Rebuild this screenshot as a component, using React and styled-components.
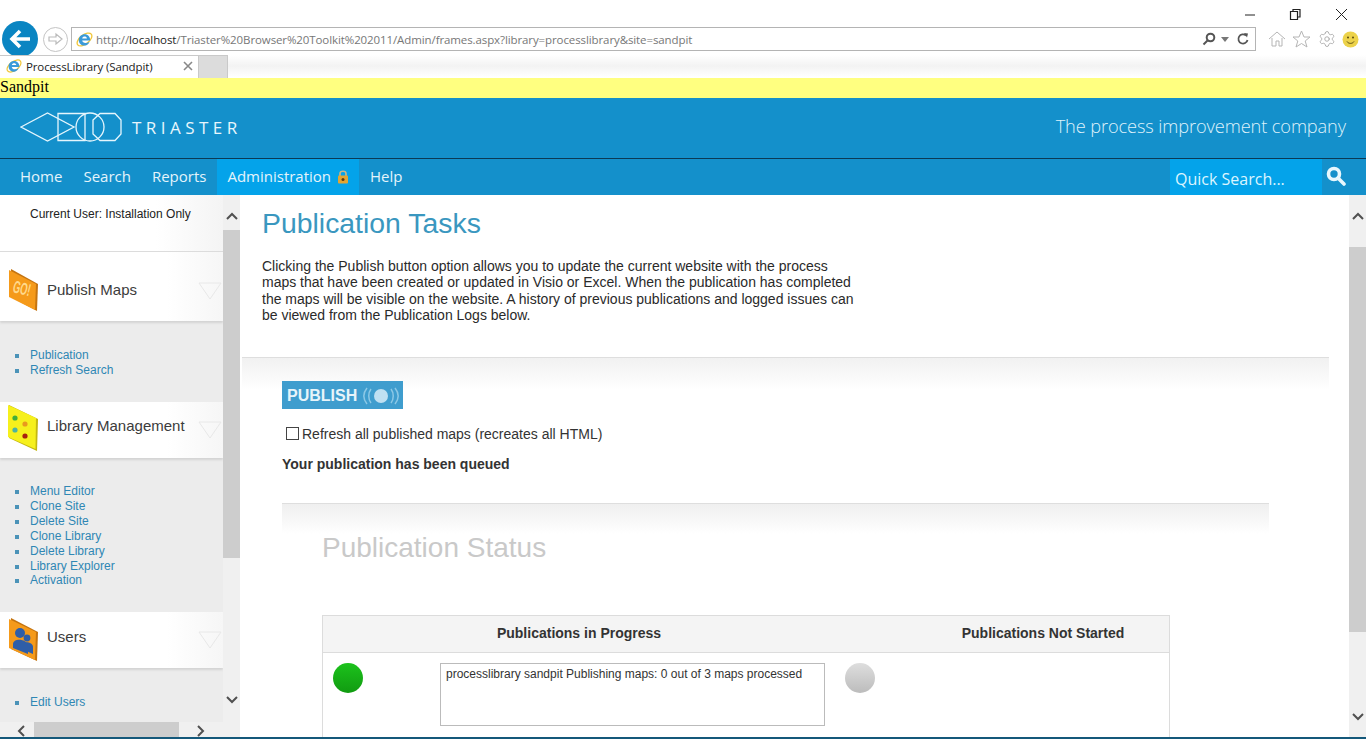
import React from "react";
import styled, { createGlobalStyle } from "styled-components";
import { Settings } from "lucide-react";

const Global = createGlobalStyle`
    html, body {
        margin: 0;
        padding: 0;
        height: 100%;
        overflow: hidden;
        background: #fff;
        font-family: "Liberation Sans", Arial, sans-serif;
    }
`;

const Page = styled.div`
    width: 1366px;
    height: 739px;
    display: flex;
    flex-direction: column;
    overflow: hidden;
    box-sizing: border-box;
    border-bottom: 2px solid #14587a;
`;

/* browser chrome */
const Chrome = styled.div`
    height: 78px;
    flex: none;
    display: flex;
    flex-direction: column;
    background: linear-gradient(#fff 55px, #f3f3f3 66px, #fff 77px);
`;

const WindowRow = styled.div`
    height: 27px;
    flex: none;
    display: flex;
    justify-content: flex-end;
    align-items: center;
    padding: 2px 18px 0 0;
    box-sizing: border-box;
    gap: 32px;
`;

const AddressRow = styled.div`
    height: 26px;
    flex: none;
    display: flex;
    align-items: center;
    padding-left: 2px;
    margin-top: -2px;
    margin-bottom: 4px;
`;

const BackButton = styled.div`
    width: 36px;
    height: 36px;
    flex: none;
    border-radius: 50%;
    background: #0a85c2;
    display: flex;
    align-items: center;
    justify-content: center;
    margin-right: 5px;
    margin-top: 2px;
`;

const ForwardButton = styled.div`
    width: 25px;
    height: 25px;
    flex: none;
    box-sizing: border-box;
    border-radius: 50%;
    border: 1px solid #c4c4c4;
    display: flex;
    align-items: center;
    justify-content: center;
    margin-right: 3px;
    margin-top: 2px;
`;

const UrlBox = styled.div`
    width: 1185px;
    height: 24px;
    flex: none;
    box-sizing: border-box;
    border: 1px solid #b4b4b4;
    background: #fff;
    display: flex;
    align-items: center;
    padding: 0 5px 0 4px;
    font: 11.5px "Open Sans", sans-serif;
    color: #777;
    margin-top: 2px;
`;

const UrlText = styled.span`
    margin-left: 3px;
    flex: 1;
    letter-spacing: -0.1px;
    white-space: nowrap;
    b {
        font-weight: 400;
        color: #222;
    }
`;

const UrlTools = styled.div`
    display: flex;
    align-items: center;
    gap: 5px;
`;

const ToolIcons = styled.div`
    display: flex;
    align-items: center;
    gap: 6px;
    margin-left: 12px;
    margin-top: 2px;
`;

const TabRow = styled.div`
    height: 23px;
    flex: none;
    display: flex;
    align-items: flex-end;
`;

const Tab = styled.div`
    width: 199px;
    height: 23px;
    box-sizing: border-box;
    background: #fff;
    border: 1px solid #c9c9c9;
    border-bottom: none;
    border-left: none;
    display: flex;
    align-items: center;
    padding: 0 5px 2px 6px;
    font: 11.5px "Open Sans", sans-serif;
    letter-spacing: -0.13px;
    color: #222;
`;

const TabTitle = styled.span`
    flex: 1;
    margin-left: 4px;
`;

const NewTab = styled.div`
    width: 29px;
    height: 23px;
    box-sizing: border-box;
    background: #dcdcdc;
    border: 1px solid #c9c9c9;
    border-bottom: none;
    border-left: none;
`;

const EnvBar = styled.div`
    height: 20px;
    flex: none;
    background: #ffff80;
    font: 16px/17px "Liberation Serif", serif;
    color: #000;
    white-space: nowrap;
`;

/* site header */
const Header = styled.header`
    height: 58px;
    flex: none;
    background: #1490cb;
    border-bottom: 1px solid #0b3a55;
    display: flex;
    align-items: center;
    justify-content: space-between;
    padding: 0 20px 2px 20px;
    box-sizing: content-box;
`;

const Brand = styled.div`
    display: flex;
    align-items: center;
    gap: 10px;
    color: #e8f6fc;
    font: 400 17px "Open Sans", sans-serif;
    letter-spacing: 4.45px;
`;

const Tagline = styled.div`
    font: 300 18.2px "Open Sans", sans-serif;
    color: #dff2fb;
    letter-spacing: -0.1px;
    margin-top: -3px;
`;

const Nav = styled.nav`
    height: 36px;
    flex: none;
    background: #1490cb;
    display: flex;
    padding-left: 10px;
    font: 15px "Open Sans", sans-serif;
    color: #e4f4fb;
`;

const NavItem = styled.div`
    display: flex;
    align-items: center;
    gap: 6px;
    padding: 0 10px 2px;
    background: ${({ $active }) => ($active ? "#04a3ea" : "transparent")};
    margin-right: ${({ $gap }) => $gap || 0}px;
`;

const QuickSearch = styled.div`
    margin-left: auto;
    display: flex;
    align-items: stretch;
`;

const QuickField = styled.div`
    width: 152px;
    background: #04a3ea;
    padding: 9px 0 0 5px;
    font-size: 16px;
    color: #dcf5ff;
    box-sizing: border-box;
`;

const QuickButton = styled.div`
    width: 44px;
    box-sizing: border-box;
    padding: 0 16px 2px 0;
    display: flex;
    align-items: center;
    justify-content: center;
`;

/* frames */
const Frames = styled.div`
    flex: 1;
    min-height: 0;
    display: flex;
`;

const LeftFrame = styled.aside`
    width: 240px;
    flex: none;
    display: grid;
    grid-template-columns: 223px 17px;
    grid-template-rows: 527px 17px;
`;

const LeftPane = styled.div`
    overflow: hidden;
    background: linear-gradient(90deg, #fff 70%, #f4f4f4 100%);
`;

const CurrentUser = styled.div`
    height: 57px;
    box-sizing: border-box;
    border-bottom: 1px solid #dcdcdc;
    padding: 12px 0 0 30px;
    font-size: 12px;
    color: #222;
`;

const SectionHead = styled.div`
    height: ${({ $tall }) => ($tall ? 69 : 56)}px;
    box-sizing: border-box;
    background: linear-gradient(90deg, #fff 75%, #f6f6f6 100%);
    box-shadow: 0 2px 2px #d4d4d4;
    display: flex;
    align-items: center;
    padding: ${({ $tall }) => ($tall ? "8px" : "0")} 1px 0 7px;
    position: relative;
    font-size: 15px;
    color: #3c3c3c;
`;

const SectionTitle = styled.span`
    flex: 1;
    margin-left: 8px;
    margin-top: ${({ $shift }) => $shift}px;
`;

const SectionList = styled.ul`
    height: ${({ $h }) => $h}px;
    box-sizing: border-box;
    margin: 0;
    padding: ${({ $top }) => $top || 25}px 0 0 30px;
    list-style: none;
    background: #ececec;
`;

const SectionLink = styled.li`
    font-size: 12px;
    line-height: 14.9px;
    color: #2f87b4;
    position: relative;
    white-space: nowrap;
    &::before {
        content: "";
        position: absolute;
        left: -15px;
        top: 6px;
        width: 4px;
        height: 4px;
        background: #4b93b8;
    }
`;

const Scrollbar = styled.div`
    background: #f0f0f0;
    display: flex;
    flex-direction: ${({ $horizontal }) => ($horizontal ? "row" : "column")};
    align-items: center;
    justify-content: space-between;
    position: relative;
`;

const ScrollThumb = styled.div`
    background: #cdcdcd;
    flex: none;
    position: absolute;
    ${({ $horizontal }) => ($horizontal ? "top:0;bottom:0;" : "left:0;right:0;")}
`;

const ArrowCell = styled.div`
    width: 17px;
    height: ${({ $span }) => $span || 17}px;
    display: flex;
    align-items: center;
    justify-content: center;
    flex: none;
`;

const Corner = styled.div`
    background: #f0f0f0;
`;

const MainFrame = styled.main`
    flex: 1;
    min-width: 0;
    display: flex;
`;

const MainPane = styled.div`
    flex: 1;
    overflow: hidden;
    padding: 0 20px 0 2px;
`;

const Intro = styled.div`
    padding: 12px 0 0 20px;
    height: 162px;
    box-sizing: border-box;
`;

const Title = styled.h1`
    margin: 0 0 19px;
    font-size: 28.4px;
    line-height: 32px;
    font-weight: 400;
    color: #3a97bf;
`;

const Lead = styled.p`
    margin: 0;
    width: 600px;
    font-size: 14px;
    line-height: 16.3px;
    color: #2a2a2a;
`;

const ActionBand = styled.section`
    border-top: 1px solid #dedede;
    background: linear-gradient(#f1f1f1, #fff 32px);
    padding: 23px 60px 0 40px;
`;

const PublishButton = styled.div`
    width: 121px;
    height: 28px;
    background: #3f9dce;
    display: flex;
    align-items: center;
    gap: 5px;
    padding: 1px 0 0 5px;
    box-sizing: border-box;
    color: #e7f4fa;
    font-size: 16px;
    font-weight: 700;
`;

const RefreshLine = styled.label`
    display: flex;
    align-items: center;
    margin: 17px 0 0 4px;
    height: 16px;
    font-size: 14px;
    color: #333;
`;

const Box = styled.span`
    width: 13px;
    height: 13px;
    box-sizing: border-box;
    border: 1px solid #444;
    background: #fff;
    margin-right: 3px;
    margin-top: -2px;
`;

const Queued = styled.div`
    margin-top: 14px;
    font-size: 14px;
    line-height: 16px;
    font-weight: 700;
    color: #333;
`;

const StatusPanel = styled.section`
    margin-top: 31px;
    border-top: 1px solid #dedede;
    background: linear-gradient(#efefef, #fff 30px);
    padding: 26px 0 0 40px;
`;

const StatusTitle = styled.h2`
    margin: 0 0 50px;
    font-size: 28px;
    line-height: 35px;
    font-weight: 400;
    color: #c9c9c9;
`;

const StatusTable = styled.div`
    width: 848px;
    box-sizing: border-box;
    border: 1px solid #dcdcdc;
    border-bottom: none;
    height: 140px;
`;

const StatusHead = styled.div`
    height: 36px;
    background: #f4f4f4;
    border-bottom: 1px solid #dcdcdc;
    display: grid;
    grid-template-columns: 512px 1fr;
    font-size: 14px;
    font-weight: 700;
    color: #333;
    line-height: 35px;
`;

const HeadCell = styled.div`
    text-align: center;
    padding-left: ${({ $pad }) => $pad || 0}px;
`;

const StatusRow = styled.div`
    display: flex;
    align-items: flex-start;
    padding: 10px 0 0 10px;
`;

const Dot = styled.div`
    width: 30px;
    height: 30px;
    flex: none;
    border-radius: 50%;
    background: ${({ $grey }) =>
        $grey ? "linear-gradient(#dedede, #bcbcbc)" : "linear-gradient(#1cc21c, #119b11)"};
    margin-right: ${({ $gap }) => $gap || 0}px;
`;

const MessageBox = styled.div`
    width: 385px;
    height: 63px;
    flex: none;
    box-sizing: border-box;
    border: 1px solid #bbb;
    padding: 3px 5px;
    font-size: 12px;
    line-height: 14px;
    color: #333;
    margin-right: 20px;
`;

const IeIcon = ({ size = 17 }) => (
    <svg width={size} height={size} viewBox="0 0 17 17">
        <ellipse cx="8.5" cy="8.5" rx="8.6" ry="4.6" fill="none" stroke="#f0c63a" strokeWidth="1.3" transform="rotate(-38 8.5 8.5)" />
        <path
            d="M2.8 8.5 C3 5.5 5.5 3.2 8.7 3.2 C12 3.2 14.3 5.8 14.2 9.6 L6.2 9.6 C6.4 12.2 10 12.8 13.4 11 C12.4 13.6 10.4 14.6 8.4 14.6 C4.8 14.6 2.5 12 2.8 8.5 Z M6.2 7.4 L10.9 7.4 C10.7 5 6.6 5 6.2 7.4 Z"
            fill="#3a9ad9"
            fillRule="evenodd"
        />
    </svg>
);

const Logo = () => (
    <svg width="102" height="30" viewBox="0 0 102 30" fill="none" stroke="#e6f6fd" strokeWidth="1.3">
        <path d="M1 15 L27.5 1 L54 15 L27.5 29 Z" />
        <path d="M38 1.5 H65 V28.5 H38 Z" />
        <circle cx="70" cy="15" r="14" />
        <path d="M80 1.5 H95 L101 8 V22 L95 28.5 H80 L73 22 V8 Z" />
    </svg>
);

const Chevron = ({ dir }) => {
    const paths = {
        up: "M1 9 L6 4 L11 9",
        down: "M1 4 L6 9 L11 4",
        left: "M9 1 L4 6 L9 11",
        right: "M3 1 L8 6 L3 11",
    };
    return (
        <svg width="12" height="12" viewBox="0 0 12 12" fill="none" stroke="#505050" strokeWidth="2">
            <path d={paths[dir]} />
        </svg>
    );
};

const Funnel = () => (
    <svg width="24" height="18" viewBox="0 0 24 18" fill="none" stroke="#e8e8e8" strokeWidth="1">
        <path d="M1 1 H23 L12 17 Z" />
    </svg>
);

const GoIcon = () => (
    <svg width="32" height="44" viewBox="0 0 32 44">
        <path d="M4 0 L31 15 L30 42 L4 28 Z" fill="#c47410" />
        <path d="M2 1 L29 15 L28 41 L2 28 Z" fill="#f59a1a" />
        <text x="0" y="0" fontFamily="Liberation Sans" fontSize="15" fontWeight="700" fill="#ffd98c" transform="translate(5 23) rotate(14) scale(0.62 1.15)">GO!</text>
    </svg>
);

const DotsIcon = () => (
    <svg width="32" height="48" viewBox="0 0 32 48" style={{ marginTop: -4 }}>
        <path d="M2 1 L31 15 L30 47 L2 34 Z" fill="#c4b810" />
        <path d="M1 1 L29 14 L28.5 45 L1 33 Z" fill="#f6f01c" />
        <circle cx="8" cy="14" r="2.6" fill="#3fae3a" />
        <circle cx="18" cy="20" r="2.6" fill="#e89a1e" />
        <circle cx="8" cy="26" r="2.6" fill="#4cb3a0" />
        <circle cx="18" cy="32" r="2.6" fill="#a8200e" />
    </svg>
);

const UsersIcon = () => (
    <svg width="32" height="44" viewBox="0 0 32 44">
        <path d="M4 0 L31 14 L30 43 L4 31 Z" fill="#c47410" />
        <path d="M2 1 L29 14 L28 42 L2 30 Z" fill="#f59a1a" />
        <circle cx="20" cy="20" r="3.4" fill="#2f5ea8" />
        <path d="M16 25 C20 23 26 25 26 29 V36 L17 32 Z" fill="#2f5ea8" />
        <circle cx="13" cy="15" r="5" fill="#2f5ea8" />
        <path d="M6 30 V26 C6 20 20 20 21 28 V36 Z" fill="#2f5ea8" />
    </svg>
);

const MiniButton = styled.svg`
    flex: none;
`;

const App = () => (
    <Page>
        <Global />
        <Chrome>
            <WindowRow>
                <MiniButton width="13" height="13" viewBox="0 0 13 13" stroke="#222" fill="none">
                    <path d="M2 7 H12" />
                </MiniButton>
                <MiniButton width="13" height="13" viewBox="0 0 13 13" stroke="#222" fill="none" strokeWidth="1.2" style={{ marginLeft: 1 }}>
                    <path d="M1.5 3.5 H8.5 V11.5 H1.5 Z M4 3.5 V1.5 H11 V9 H8.5" />
                </MiniButton>
                <MiniButton width="13" height="13" viewBox="0 0 13 13" stroke="#222" fill="none" style={{ marginLeft: 1 }}>
                    <path d="M1 1 L12 12 M12 1 L1 12" />
                </MiniButton>
            </WindowRow>
            <AddressRow>
                <BackButton>
                    <svg width="22" height="20" viewBox="0 0 22 20" fill="none" stroke="#fff" strokeWidth="3.6">
                        <path d="M11 2 L3 10 L11 18 M3 10 H21" />
                    </svg>
                </BackButton>
                <ForwardButton>
                    <svg width="16" height="14" viewBox="0 0 16 14" fill="none" stroke="#bbb" strokeWidth="1.2">
                        <path d="M1 5 H8 V2 L14 7 L8 12 V9 H1 Z" />
                    </svg>
                </ForwardButton>
                <UrlBox>
                    <IeIcon />
                    <UrlText>
                        http://<b>localhost</b>/Triaster%20Browser%20Toolkit%202011/Admin/frames.aspx?library=processlibrary&amp;site=sandpit
                    </UrlText>
                    <UrlTools>
                        <svg width="14" height="14" viewBox="0 0 14 14" fill="none" stroke="#555" strokeWidth="2">
                            <circle cx="8.5" cy="5.5" r="3.8" />
                            <path d="M5.5 8.5 L1.5 12.5" />
                        </svg>
                        <svg width="8" height="5" viewBox="0 0 8 5">
                            <path d="M0 0 H8 L4 5 Z" fill="#777" />
                        </svg>
                        <svg width="14" height="14" viewBox="0 0 14 14" fill="none" stroke="#555" strokeWidth="1.8" style={{ marginLeft: 2 }}>
                            <path d="M11.5 8 A4.6 4.6 0 1 1 10 3.5" />
                            <path d="M8 1 L12 1.5 L11 5.5 Z" fill="#555" stroke="none" />
                        </svg>
                    </UrlTools>
                </UrlBox>
                <ToolIcons>
                    <svg width="18" height="18" viewBox="0 0 18 18" fill="none" stroke="#b5b5b5">
                        <path d="M1 9 L9 2 L17 9 M4 8 V16 H8 V11 H11 V16 H14 V8" />
                    </svg>
                    <svg width="19" height="18" viewBox="0 0 19 18" fill="none" stroke="#b5b5b5">
                        <path d="M9.5 1 L12 7 L18 7 L13.2 11 L15 17 L9.5 13.5 L4 17 L5.8 11 L1 7 L7 7 Z" />
                    </svg>
                    <Settings size={18} color="#a8a8a8" strokeWidth={1.2} style={{ marginLeft: 1 }} />
                    <svg width="17" height="17" viewBox="0 0 17 17">
                        <circle cx="8.5" cy="8.5" r="8" fill="#ecd24a" />
                        <circle cx="6" cy="6.5" r="1" fill="#5a4a10" />
                        <circle cx="11" cy="6.5" r="1" fill="#5a4a10" />
                        <path d="M5 10.5 C6.5 13 10.5 13 12 10.5" fill="none" stroke="#5a4a10" />
                    </svg>
                </ToolIcons>
            </AddressRow>
            <TabRow>
                <Tab>
                    <IeIcon size={16} />
                    <TabTitle>ProcessLibrary (Sandpit)</TabTitle>
                    <svg width="10" height="10" viewBox="0 0 10 10" stroke="#888" strokeWidth="1.6">
                        <path d="M1 1 L9 9 M9 1 L1 9" />
                    </svg>
                </Tab>
                <NewTab />
            </TabRow>
        </Chrome>
        <EnvBar>Sandpit</EnvBar>
        <Header>
            <Brand>
                <Logo />
                TRIASTER
            </Brand>
            <Tagline>The process improvement company</Tagline>
        </Header>
        <Nav>
            <NavItem $gap={1}>Home</NavItem>
            <NavItem $gap={1}>Search</NavItem>
            <NavItem $gap={1}>Reports</NavItem>
            <NavItem $active $gap={1}>
                Administration
                <svg width="12" height="15" viewBox="0 0 12 15">
                    <path d="M3 7 V4.5 C3 1.5 9 1.5 9 4.5 V7" fill="none" stroke="#c9b78a" strokeWidth="1.6" />
                    <rect x="1" y="6.5" width="10" height="8" rx="1" fill="#e3a532" />
                    <circle cx="6" cy="10.5" r="1.5" fill="#5b3a10" />
                </svg>
            </NavItem>
            <NavItem>Help</NavItem>
            <QuickSearch>
                <QuickField>Quick Search...</QuickField>
                <QuickButton>
                    <svg width="20" height="20" viewBox="0 0 20 20" fill="none" stroke="#e8f7fd" strokeWidth="3.6">
                        <circle cx="8" cy="8" r="5.5" />
                        <path d="M12 12 L18 18" strokeLinecap="round" />
                    </svg>
                </QuickButton>
            </QuickSearch>
        </Nav>
        <Frames>
            <LeftFrame>
                <LeftPane>
                    <CurrentUser>Current User: Installation Only</CurrentUser>
                    <SectionHead $tall>
                        <GoIcon />
                        <SectionTitle $shift={-2}>Publish Maps</SectionTitle>
                        <Funnel />
                    </SectionHead>
                    <SectionList $h={81} $top={27}>
                        <SectionLink>Publication</SectionLink>
                        <SectionLink>Refresh Search</SectionLink>
                    </SectionList>
                    <SectionHead>
                        <DotsIcon />
                        <SectionTitle $shift={-10}>Library Management</SectionTitle>
                        <Funnel />
                    </SectionHead>
                    <SectionList $h={154} $top={26}>
                        <SectionLink>Menu Editor</SectionLink>
                        <SectionLink>Clone Site</SectionLink>
                        <SectionLink>Delete Site</SectionLink>
                        <SectionLink>Clone Library</SectionLink>
                        <SectionLink>Delete Library</SectionLink>
                        <SectionLink>Library Explorer</SectionLink>
                        <SectionLink>Activation</SectionLink>
                    </SectionList>
                    <SectionHead>
                        <UsersIcon />
                        <SectionTitle $shift={-8}>Users</SectionTitle>
                        <Funnel />
                    </SectionHead>
                    <SectionList $h={60} $top={27}>
                        <SectionLink>Edit Users</SectionLink>
                    </SectionList>
                </LeftPane>
                <Scrollbar>
                    <ArrowCell $span={42}>
                        <Chevron dir="up" />
                    </ArrowCell>
                    <ScrollThumb style={{ top: 35, height: 328 }} />
                    <ArrowCell $span={46}>
                        <Chevron dir="down" />
                    </ArrowCell>
                </Scrollbar>
                <Scrollbar $horizontal style={{ padding: "0 14px 0 12px" }}>
                    <ArrowCell>
                        <Chevron dir="left" />
                    </ArrowCell>
                    <ScrollThumb $horizontal style={{ left: 34, width: 145 }} />
                    <ArrowCell>
                        <Chevron dir="right" />
                    </ArrowCell>
                </Scrollbar>
                <Corner />
            </LeftFrame>
            <MainFrame>
                <MainPane>
                    <Intro>
                        <Title>Publication Tasks</Title>
                        <Lead>
                            Clicking the Publish button option allows you to update the current website with the process
                            maps that have been created or updated in Visio or Excel. When the publication has completed
                            the maps will be visible on the website. A history of previous publications and logged issues can
                            be viewed from the Publication Logs below.
                        </Lead>
                    </Intro>
                    <ActionBand>
                        <PublishButton>
                            PUBLISH
                            <svg width="38" height="20" viewBox="0 0 38 20" fill="none" stroke="#8cc8e6" strokeWidth="1.5">
                                <path d="M5 2 C1 7 1 13 5 18 M9 3 C6 7 6 13 9 17 M29 3 C32 7 32 13 29 17 M33 2 C37 7 37 13 33 18" />
                                <circle cx="19" cy="10" r="7" fill="#bfe0f2" stroke="none" />
                            </svg>
                        </PublishButton>
                        <RefreshLine>
                            <Box />
                            Refresh all published maps (recreates all HTML)
                        </RefreshLine>
                        <Queued>Your publication has been queued</Queued>
                        <StatusPanel>
                            <StatusTitle>Publication Status</StatusTitle>
                            <StatusTable>
                                <StatusHead>
                                    <HeadCell>Publications in Progress</HeadCell>
                                    <HeadCell $pad={82}>Publications Not Started</HeadCell>
                                </StatusHead>
                                <StatusRow>
                                    <Dot $gap={77} />
                                    <MessageBox>processlibrary sandpit Publishing maps: 0 out of 3 maps processed</MessageBox>
                                    <Dot $grey />
                                </StatusRow>
                            </StatusTable>
                        </StatusPanel>
                    </ActionBand>
                </MainPane>
                <Scrollbar style={{ width: 17, flex: "none" }}>
                    <ArrowCell $span={42}>
                        <Chevron dir="up" />
                    </ArrowCell>
                    <ScrollThumb style={{ top: 52, height: 385 }} />
                    <ArrowCell $span={42}>
                        <Chevron dir="down" />
                    </ArrowCell>
                </Scrollbar>
            </MainFrame>
        </Frames>
    </Page>
);

export default App;
